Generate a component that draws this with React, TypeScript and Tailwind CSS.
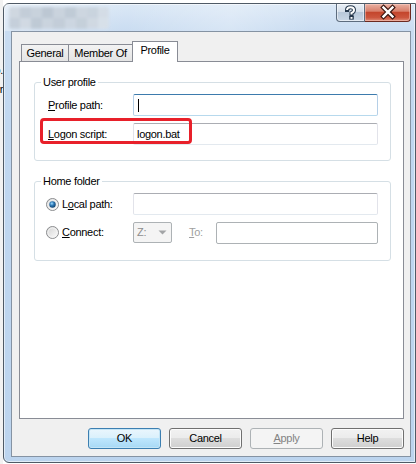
import React from "react";

const blocks = [
  ["#cdd5de", "#c0cad5", "#c6d0da", "#b9c4d0", "#c8d1db", "#bdc8d3", "#ccd5de", "#c8d2dc", "#d4dce5"],
  ["#c3cdd8", "#d0d8e1", "#bcc7d2", "#c9d2dc", "#c1cbd6", "#ccd5df", "#c4ced8", "#d0d8e1", "#d8e0e8"],
];

function Radio({ checked }: { checked?: boolean }) {
  const id = checked ? "rc" : "ru";
  return (
    <svg width="13" height="13" viewBox="0 0 13 13" className="shrink-0">
      <defs>
        <linearGradient id={id + "g"} x1="0" y1="0" x2="1" y2="1">
          <stop offset="0" stopColor="#d0d0d0" />
          <stop offset="1" stopColor="#ffffff" />
        </linearGradient>
        <radialGradient id={id + "d"} cx="0.4" cy="0.35" r="0.7">
          <stop offset="0" stopColor="#9fdcff" />
          <stop offset="0.45" stopColor="#2d78b5" />
          <stop offset="1" stopColor="#0d3c66" />
        </radialGradient>
      </defs>
      <circle cx="6.5" cy="6.5" r="6" fill={`url(#${id}g)`} stroke="#8a8c8e" />
      <circle cx="6.5" cy="6.5" r="4.6" fill="none" stroke="#f4f4f4" strokeWidth="1" />
      {checked && <circle cx="6.5" cy="6.5" r="3.2" fill={`url(#${id}d)`} />}
    </svg>
  );
}

function TextBox({ className = "", focused, disabled, children }: { className?: string; focused?: boolean; disabled?: boolean; children?: React.ReactNode }) {
  const border = focused
    ? "border-[#b5cfe7] border-t-[#3d7bad] border-b-[#b7d9ed]"
    : disabled
    ? "border-[#adb2b5]"
    : "border-[#e2e3ea] border-t-[#abadb3] border-b-[#e3e9ef]";
  return (
    <div className={`h-[22px] border rounded-[2px] bg-white flex items-center pl-[3px] ${border} ${className}`}>
      {children}
    </div>
  );
}

function Btn({ children, kind = "normal" }: { children: React.ReactNode; kind?: "normal" | "default" | "disabled" }) {
  const cls =
    kind === "default"
      ? "border-[#3c7fb1] bg-[linear-gradient(to_bottom,#eaf6fd_0%,#d9f0fc_50%,#bee6fd_50%,#a7d9f5_100%)] shadow-[inset_0_0_0_1px_#c4e5f6]"
      : kind === "disabled"
      ? "border-[#adb2b5] bg-[#f4f4f4] text-[#838383]"
      : "border-[#707070] bg-[linear-gradient(to_bottom,#f2f2f2_0%,#ebebeb_50%,#dddddd_50%,#cfcfcf_100%)] shadow-[inset_0_0_0_1px_#fcfcfc]";
  return (
    <div className={`w-[73px] h-[21px] border rounded-[3px] flex items-center justify-center ${cls}`}>
      {children}
    </div>
  );
}

export default function App() {
  return (
    <div className="w-[416px] h-[464px] bg-white overflow-hidden flex font-['Liberation_Sans',Arial,sans-serif] text-[11px] tracking-[-0.3px] text-black leading-[13px]">
      {/* left strip (background window) */}
      <div className="w-[3px] h-full bg-[#f2f2f2] overflow-hidden flex flex-col items-end whitespace-nowrap">
        <div className="mt-[64px] pr-[0px]">lo.</div>
        <div className="mt-[6px]">or</div>
      </div>

      {/* window */}
      <div className="pt-[3px]">
        <div className="w-[413px] h-[460px] border border-[#4f5a66] rounded-tl-[6px] rounded-bl-[6px] bg-[linear-gradient(to_bottom,#dbe8f6_0px,#c9dcf1_28px,#c0d7f0_120px,#bcd4ee_100%)] shadow-[inset_0_0_0_1px_rgba(255,255,255,0.55)] flex flex-col">
          {/* title bar */}
          <div className="h-[27px] flex shrink-0 bg-[linear-gradient(100deg,rgba(255,255,255,0.35)_0%,rgba(255,255,255,0)_30%,rgba(255,255,255,0.25)_55%,rgba(255,255,255,0)_75%)]">
            <div className="ml-[5px] mt-[3px] w-[100px] h-[22px] grid grid-cols-9 grid-rows-2 blur-[1.5px] opacity-90 rounded-[3px] overflow-hidden">
              {blocks.flat().map((c, i) => (
                <div key={i} style={{ backgroundColor: c }} />
              ))}
            </div>
            <div className="flex-1" />
            <div className="flex self-start mr-[4px]">
              <div className="w-[29px] h-[18px] border border-t-0 border-[#5d6c7e] rounded-bl-[4px] bg-[linear-gradient(to_bottom,#e9eff6_0%,#d5dfea_45%,#b8c8da_50%,#c9d7e6_100%)] shadow-[inset_0_0_0_1px_rgba(255,255,255,0.5)]">
                <svg width="27" height="17" viewBox="0 0 27 17">
                  <path d="M10 6 Q10 3.2 13.5 3.2 Q17 3.2 17 6 Q17 8 14.5 9 L14.5 10.6" fill="none" stroke="#26384c" strokeWidth="4" strokeLinecap="square" />
                  <rect x="12.2" y="12" width="4.6" height="3.6" fill="#26384c" />
                  <path d="M10 6 Q10 3.2 13.5 3.2 Q17 3.2 17 6 Q17 8 14.5 9 L14.5 10.6" fill="none" stroke="#ffffff" strokeWidth="2" />
                  <rect x="13.5" y="13" width="2" height="1.8" fill="#ffffff" />
                </svg>
              </div>
              <div className="w-[46px] h-[18px] border border-t-0 border-l-0 border-[#6b2a20] rounded-br-[4px] bg-[linear-gradient(to_bottom,#eab1a3_0%,#d8806c_42%,#c4462d_50%,#cc563e_80%,#df8e78_100%)] shadow-[inset_0_0_0_1px_rgba(255,220,210,0.45)]">
                <svg width="46" height="17" viewBox="0 0 46 17">
                  <path d="M18.5 3.5 L27.5 12.5 M27.5 3.5 L18.5 12.5" stroke="#3b1610" strokeWidth="4.6" strokeLinecap="square" />
                  <path d="M18.5 3.5 L27.5 12.5 M27.5 3.5 L18.5 12.5" stroke="#ffffff" strokeWidth="2.4" strokeLinecap="square" />
                </svg>
              </div>
            </div>
          </div>

          {/* frame + client */}
          <div className="pl-[7px] pr-[4px] pb-[5px] flex-1 flex">
            <div className="flex-1 border border-[#8593a3] bg-[#f0f0f0] flex flex-col">
              {/* tabs */}
              <div className="pt-[8px] pl-[7px] flex flex-col">
                <div className="flex items-end pl-[2px] h-[21px]">
                  <div className="w-[48px] h-[17px] border border-b-0 border-[#898c95] bg-[linear-gradient(to_bottom,#f3f3f3,#e4e4e4)] flex items-center justify-center">
                    General
                  </div>
                  <div className="w-[64px] h-[17px] border border-b-0 border-l-0 border-[#898c95] bg-[linear-gradient(to_bottom,#f3f3f3,#e4e4e4)] flex items-center justify-center">
                    Member Of
                  </div>
                  <div className="ml-[-1px] w-[46px] h-[21px] mb-[-1px] relative z-10 border border-b-0 border-[#898c95] bg-white flex items-center justify-center pb-[3px]">
                    Profile
                  </div>
                </div>

                {/* panel */}
                <div className="w-[385px] h-[358px] border border-[#898c95] bg-white flex flex-col">
                  {/* User profile */}
                  <div className="relative ml-[14px] mt-[20px] w-[357px] h-[79px] border border-[#d5dfe5] rounded-[3px] flex flex-col">
                    <div className="absolute left-[6px] top-[-7px] bg-white px-[2px]">User profile</div>
                    <div className="flex items-center mt-[11px]">
                      <div className="w-[98px] pl-[13px]">
                        <span className="underline underline-offset-[1px]">P</span>rofile path:
                      </div>
                      <TextBox focused className="w-[245px]">
                        <div className="w-px h-[13px] bg-black ml-[1px]" />
                      </TextBox>
                    </div>
                    <div className="flex items-center mt-[7px]">
                      <div className="w-[98px] pl-[13px]">
                        <span className="underline underline-offset-[1px]">L</span>ogon script:
                      </div>
                      <TextBox className="w-[245px]">logon.bat</TextBox>
                    </div>
                    <div className="absolute left-[5px] top-[35px] w-[152px] h-[26px] border-[3px] border-[#e8202a] rounded-[4px]" />
                  </div>

                  {/* Home folder */}
                  <div className="relative ml-[14px] mt-[20px] w-[357px] h-[80px] border border-[#d5dfe5] rounded-[3px] flex flex-col">
                    <div className="absolute left-[6px] top-[-7px] bg-white px-[2px]">Home folder</div>
                    <div className="flex items-center mt-[11px]">
                      <div className="w-[98px] pl-[11px] flex items-center gap-[3px]">
                        <Radio checked />
                        <span>
                          L<span className="underline underline-offset-[1px]">o</span>cal path:
                        </span>
                      </div>
                      <TextBox className="w-[245px]" />
                    </div>
                    <div className="flex items-start mt-[7px]">
                      <div className="w-[98px] h-[21px] pl-[11px] flex items-center gap-[3px]">
                        <Radio />
                        <span>
                          <span className="underline underline-offset-[1px]">C</span>onnect:
                        </span>
                      </div>
                      <div className="w-[39px] h-[21px] border border-[#adb2b5] rounded-[2px] bg-[#f4f4f4] flex items-center pl-[3px] text-[#8d8d8d]">
                        <span className="flex-1">Z:</span>
                        <svg width="9" height="5" viewBox="0 0 9 5" className="mr-[4px]">
                          <path d="M0.5 0.5 L8.5 0.5 L4.5 4.5 Z" fill="#a2a4a6" />
                        </svg>
                      </div>
                      <div className="w-[44px] h-[21px] pl-[17px] flex items-center text-[#a0a0a0]">
                        <span>
                          <span className="underline underline-offset-[1px]">T</span>o:
                        </span>
                      </div>
                      <TextBox disabled className="w-[162px]" />
                    </div>
                  </div>
                </div>

                {/* buttons */}
                <div className="flex justify-end gap-[8px] mt-[9px] w-[385px]">
                  <Btn kind="default">OK</Btn>
                  <Btn>Cancel</Btn>
                  <Btn kind="disabled">
                    <span>
                      <span className="underline underline-offset-[1px]">A</span>pply
                    </span>
                  </Btn>
                  <Btn>Help</Btn>
                </div>
              </div>
            </div>
          </div>
        </div>
      </div>
    </div>
  );
}
